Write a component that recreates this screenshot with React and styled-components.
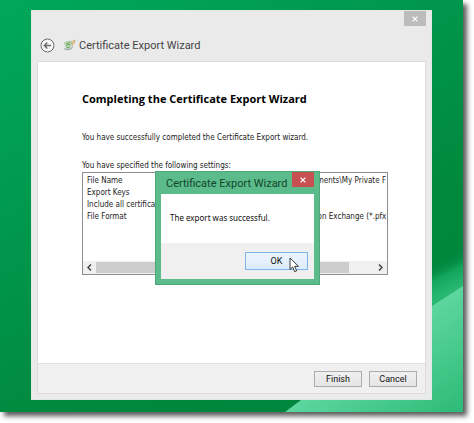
import React from 'react';
import styled, { createGlobalStyle } from 'styled-components';

const GlobalStyle = createGlobalStyle`
    * {
        box-sizing: border-box;
    }
    body {
        margin: 0;
        background: #fff;
        overflow: hidden;
    }
`;

const bodyFont = `"DejaVu Sans Condensed", "DejaVu Sans", sans-serif`;
const uiFont = `Roboto, "Open Sans", sans-serif`;

const Screen = styled.div`
    display: flex;
    min-height: 100vh;
    padding: 0 11px 11px 0;
`;

const Desktop = styled.main`
    position: relative;
    display: flex;
    flex: 1;
    min-width: 0;
    padding: 10px 31px 12px;
    background: linear-gradient(150deg, #00a75c 0%, #009a4f 30%, #00893f 65%, #00833c 100%);
    box-shadow: 4px 4px 5px rgba(0, 0, 0, 0.65);
`;

/* light sweep in the bottom right corner of the wallpaper */
const Wallpaper = styled.svg`
    position: absolute;
    right: 0;
    bottom: 0;
    width: 220px;
    height: 180px;
`;

const Window = styled.section`
    position: relative;
    display: flex;
    flex: 1;
    flex-direction: column;
    min-width: 0;
    padding: 0 5px 5px;
    background: #eaeaea;
    border: 1px solid #dfeae3;
`;

const CloseButton = styled.button`
    display: flex;
    align-items: center;
    justify-content: center;
    flex: none;
    width: 22px;
    height: 15px;
    padding: 0;
    border: 0 none;
    background: ${props => props.$active ? '#c75050' : '#bcbcbc'};
    & svg {
        display: block;
        width: 6px;
        height: 6px;
    }
`;

const TitleBar = styled.div`
    display: flex;
    justify-content: flex-end;
`;

const Header = styled.header`
    display: flex;
    align-items: center;
    height: 35px;
    padding: 6px 3px 2px;
    gap: 8px;
`;

const BackButton = styled.button`
    width: 15px;
    height: 15px;
    padding: 0;
    border: 0 none;
    background: transparent;
    & svg {
        display: block;
    }
`;

const WindowTitle = styled.h1`
    display: flex;
    align-items: center;
    gap: 3px;
    margin: 0;
    color: #444;
    font: 400 11px/16px ${uiFont};
    white-space: nowrap;
`;

const Page = styled.div`
    display: flex;
    flex: 1;
    flex-direction: column;
    min-width: 0;
    background: #fff;
    border: 1px solid #dcdcdc;
`;

const Content = styled.div`
    flex: 1;
    min-width: 0;
    padding: 29px 37px 0 44px;
    color: #222;
    font: 400 8px/12px ${bodyFont};
`;

const Heading = styled.h2`
    margin: 0 0 25px;
    color: #000;
    font: 700 11px/16px "Open Sans", "Noto Sans", sans-serif;
`;

const Text = styled.p`
    margin: 0 0 16px;
    white-space: nowrap;
`;

const Label = styled.p`
    margin: 0;
    white-space: nowrap;
`;

const ListArea = styled.div`
    position: relative;
`;

const ListBox = styled.div`
    display: flex;
    flex-direction: column;
    justify-content: space-between;
    height: 103px;
    overflow: hidden;
    border: 1px solid #8b8f94;
`;

const Settings = styled.table`
    width: 100%;
    margin-top: 2px;
    border-collapse: collapse;
    table-layout: fixed;
    & th, & td {
        height: 12px;
        padding: 0 0 0 4px;
        overflow: hidden;
        font-weight: 400;
        text-align: left;
        white-space: nowrap;
    }
    & th {
        width: 165px;
    }
`;

const ScrollBar = styled.div`
    display: flex;
    align-items: center;
    height: 13px;
    background: #f0f0f0;
`;

const ScrollArrow = styled.button`
    display: flex;
    align-items: center;
    justify-content: center;
    width: 13px;
    height: 12px;
    padding: 0;
    border: 0 none;
    background: transparent;
`;

const ScrollTrack = styled.div`
    flex: 1;
`;

const ScrollThumb = styled.div`
    width: 91%;
    height: 11px;
    background: #cdcdcd;
`;

const Footer = styled.footer`
    display: flex;
    align-items: center;
    justify-content: flex-end;
    gap: 7px;
    height: 30px;
    padding: 0 8px;
    background: #f0f0f0;
    border-top: 1px solid #dfdfdf;
`;

const PushButton = styled.button`
    width: ${props => props.$primary ? 63 : 48}px;
    height: ${props => props.$primary ? 18 : 16}px;
    padding: 0;
    border: 1px solid ${props => props.$primary ? '#7eb4ea' : '#acacac'};
    background: ${props => props.$primary
        ? 'linear-gradient(#ebf4fc, #dcecfc)'
        : 'linear-gradient(#f0f0f0, #e5e5e5)'};
    color: #111;
    font: 400 9px/12px ${uiFont};
`;

const Dialog = styled.section`
    position: absolute;
    left: 73px;
    top: -1px;
    display: flex;
    flex-direction: column;
    width: 165px;
    height: 114px;
    padding: 0 5px 5px;
    background: #5bbb8a;
    border: 1px solid #4fa87b;
`;

const DialogBar = styled.div`
    display: flex;
    align-items: flex-start;
    justify-content: space-between;
    height: 22px;
    padding-left: 5px;
`;

const DialogTitle = styled.h3`
    margin: 0;
    padding-top: 4px;
    color: #12462c;
    font: 400 11px/16px ${uiFont};
    white-space: nowrap;
`;

const Message = styled.p`
    flex: 1;
    margin: 0;
    padding: 18px 9px 0;
    background: #fff;
    color: #111;
    font: 400 8px/12px "Noto Sans", "Open Sans", sans-serif;
    white-space: nowrap;
`;

const DialogFooter = styled.div`
    display: flex;
    align-items: center;
    justify-content: flex-end;
    height: 36px;
    padding-right: 6px;
    background: #f0f0f0;
`;

const Cursor = styled.svg`
    position: absolute;
    left: 133px;
    top: 85px;
    width: 11px;
    height: 16px;
`;

const settings = [
    ['File Name', 'C:\\Users\\me\\Documents\\My Private F'],
    ['Export Keys', 'Yes'],
    ['Include all certificates in the path', 'Yes'],
    ['File Format', 'Personal Information Exchange (*.pfx)'],
];

const Cross = () => (
    <svg viewBox="0 0 6 6">
        <path d="M0.6 0.6 5.4 5.4M5.4 0.6 0.6 5.4" stroke="#fff" strokeWidth="1.3" />
    </svg>
);

const Chevron = ({ d }) => (
    <svg width="5" height="7" viewBox="0 0 5 7" fill="none">
        <path d={d} stroke="#444" strokeWidth="1.5" />
    </svg>
);

const CertificateIcon = () => (
    <svg width="13" height="13" viewBox="0 0 13 13">
        <path d="M1.5 3.5 8 2l1 4-6.5 1.500z" fill="#cfe3c8" stroke="#8fb586" strokeWidth="0.6" />
        <path d="M3 4.800 7.500 3.600M3.300 6.200 7 5.300" stroke="#4d9b4a" strokeWidth="0.9" />
        <path d="M8.500 3.500 10.500 1.300l1.700 0-.8 3-2.200 1.900z" fill="#e2c88e" stroke="#b39a6a" strokeWidth="0.5" />
        <path d="M1 9.300c1.500 1.700 5 1.800 7.200.2L9.800 7" fill="none" stroke="#a3adab" strokeWidth="1.1" />
        <path d="M2.800 8.300 7.800 7.200l-1.300 2-3 .2z" fill="#6fb267" />
    </svg>
);

const App = () => {
    return (
        <Screen>
            <GlobalStyle />
            <Desktop>
                <Wallpaper viewBox="0 0 220 180" aria-hidden="true">
                    <defs>
                        <linearGradient id="sweep" x1="0" y1="0" x2="1" y2="1">
                            <stop offset="0.4" stopColor="#66dca5" />
                            <stop offset="1" stopColor="#2dba78" />
                        </linearGradient>
                        <linearGradient id="glow" gradientUnits="userSpaceOnUse" x1="197" y1="28" x2="212" y2="57">
                            <stop offset="0" stopColor="#00853e" stopOpacity="0" />
                            <stop offset="0.5" stopColor="#14a55c" />
                            <stop offset="1" stopColor="#28b872" />
                        </linearGradient>
                    </defs>
                    <path d="M189 30 220 8V60L189 80z" fill="url(#glow)" />
                    <path d="M42 180 58 168 120 120 189 74 220 54V180z" fill="url(#sweep)" />
                </Wallpaper>
                <Window>
                    <TitleBar>
                        <CloseButton type="button" aria-label="Close"><Cross /></CloseButton>
                    </TitleBar>
                    <Header>
                        <BackButton type="button" aria-label="Back">
                            <svg width="15" height="15" viewBox="0 0 15 15" fill="none" stroke="#6a6a6a">
                                <circle cx="7.5" cy="7.5" r="6.5" fill="#f6f6f6" strokeWidth="1" />
                                <path d="M11 7.500H4.500M7.300 4.500 4.300 7.500l3 3" strokeWidth="1.400" />
                            </svg>
                        </BackButton>
                        <WindowTitle><CertificateIcon />Certificate Export Wizard</WindowTitle>
                    </Header>
                    <Page>
                        <Content>
                            <Heading>Completing the Certificate Export Wizard</Heading>
                            <Text>You have successfully completed the Certificate Export wizard.</Text>
                            <Label id="settings">You have specified the following settings:</Label>
                            <ListArea>
                                <ListBox>
                                    <Settings aria-labelledby="settings">
                                        <tbody>
                                            {settings.map(([name, value]) => (
                                                <tr key={name}>
                                                    <th scope="row">{name}</th>
                                                    <td>{value}</td>
                                                </tr>
                                            ))}
                                        </tbody>
                                    </Settings>
                                    <ScrollBar>
                                        <ScrollArrow type="button" aria-label="Scroll left"><Chevron d="M4 .5 1 3.500l3 3" /></ScrollArrow>
                                        <ScrollTrack><ScrollThumb /></ScrollTrack>
                                        <ScrollArrow type="button" aria-label="Scroll right"><Chevron d="M1 .5 4 3.500l-3 3" /></ScrollArrow>
                                    </ScrollBar>
                                </ListBox>
                                <Dialog role="dialog" aria-labelledby="dialog-title">
                                    <DialogBar>
                                        <DialogTitle id="dialog-title">Certificate Export Wizard</DialogTitle>
                                        <CloseButton type="button" $active aria-label="Close"><Cross /></CloseButton>
                                    </DialogBar>
                                    <Message>The export was successful.</Message>
                                    <DialogFooter>
                                        <PushButton type="button" $primary>OK</PushButton>
                                    </DialogFooter>
                                    <Cursor viewBox="0 0 11 16" aria-hidden="true">
                                        <path d="M1 1v11.500l2.700-2.500 2 4.700 2-.9-2-4.500h3.800z" fill="#fff" stroke="#222" strokeWidth="0.9" />
                                    </Cursor>
                                </Dialog>
                            </ListArea>
                        </Content>
                        <Footer>
                            <PushButton type="button">Finish</PushButton>
                            <PushButton type="button">Cancel</PushButton>
                        </Footer>
                    </Page>
                </Window>
            </Desktop>
        </Screen>
    );
};

export default App;
